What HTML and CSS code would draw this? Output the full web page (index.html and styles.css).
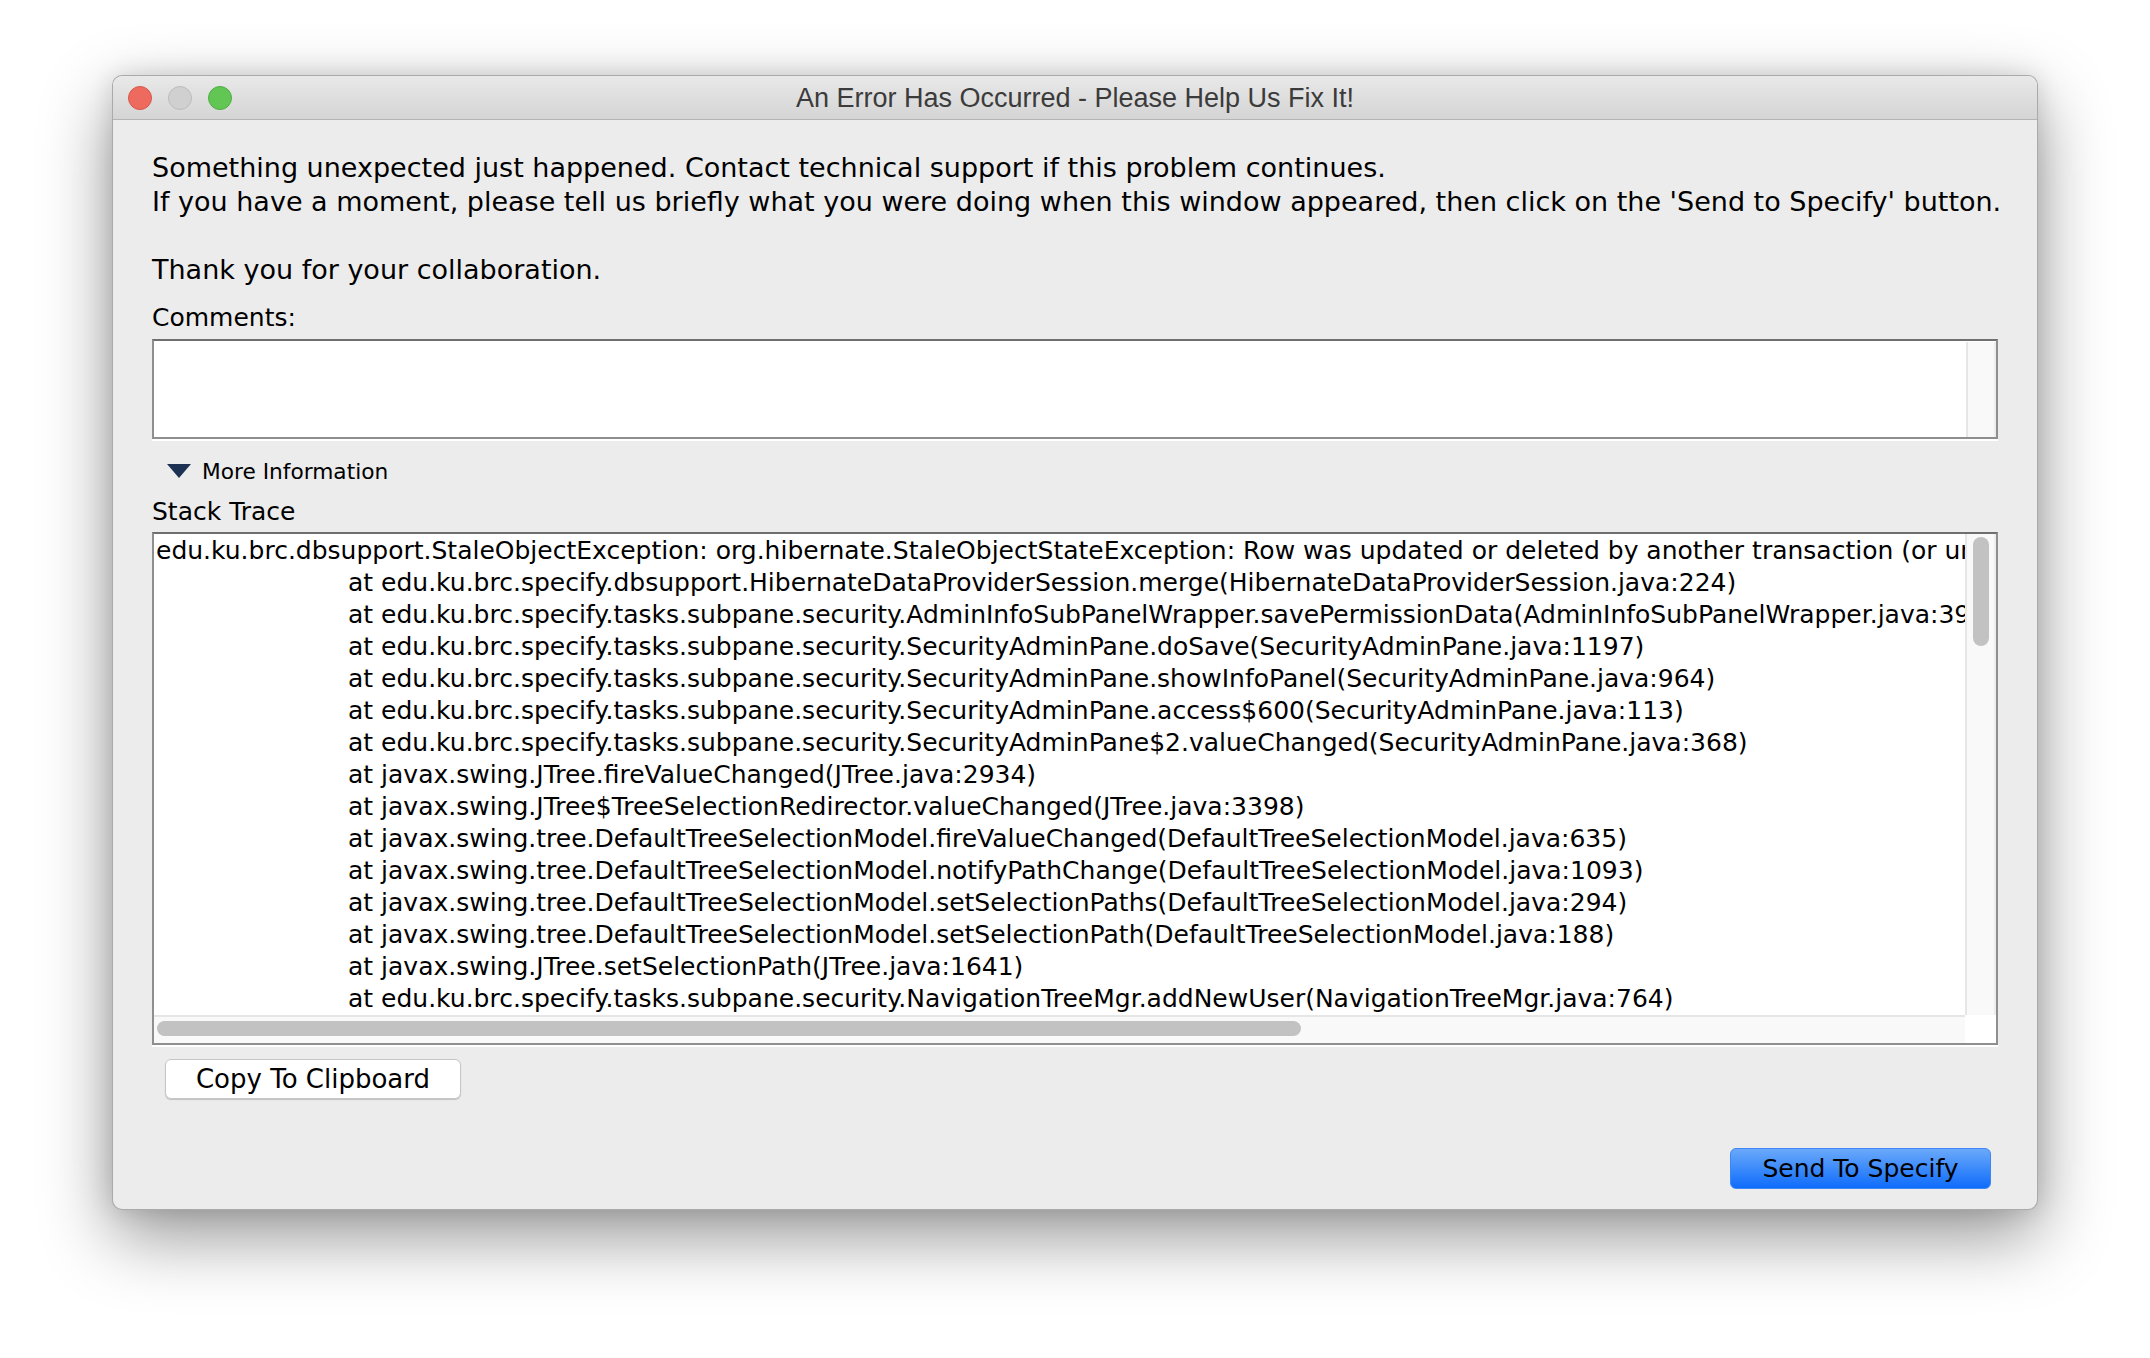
FILE: index.html
```html
<!DOCTYPE html>
<html>
<head>
<meta charset="utf-8">
<title>An Error Has Occurred</title>
<link rel="stylesheet" href="styles.css">
</head>
<body>
<div class="window">
  <div class="titlebar">
    <div class="lights">
      <span class="light red"></span>
      <span class="light gray"></span>
      <span class="light green"></span>
    </div>
    <div class="title">An Error Has Occurred - Please Help Us Fix It!</div>
  </div>
  <div class="content">
    <div class="message">
      <div>Something unexpected just happened. Contact technical support if this problem continues.</div>
      <div>If you have a moment, please tell us briefly what you were doing when this window appeared, then click on the 'Send to Specify' button.</div>
      <div class="blank">&nbsp;</div>
      <div>Thank you for your collaboration.</div>
    </div>
    <div class="label comments-label">Comments:</div>
    <div class="comments">
      <div class="comments-field"></div>
      <div class="vtrack"></div>
    </div>
    <div class="more">
      <svg class="tri" width="24" height="15" viewBox="0 0 24 15"><polygon points="0,0 24,0 12,14" fill="#1d3153"/></svg>
      <span>More Information</span>
    </div>
    <div class="label trace-label">Stack Trace</div>
    <div class="trace">
      <div class="trace-view">
        <div class="line">edu.ku.brc.dbsupport.StaleObjectException: org.hibernate.StaleObjectStateException: Row was updated or deleted by another transaction (or unsaved-value mapping was incorrect)</div>
        <div class="line at">at edu.ku.brc.specify.dbsupport.HibernateDataProviderSession.merge(HibernateDataProviderSession.java:224)</div>
        <div class="line at">at edu.ku.brc.specify.tasks.subpane.security.AdminInfoSubPanelWrapper.savePermissionData(AdminInfoSubPanelWrapper.java:391)</div>
        <div class="line at">at edu.ku.brc.specify.tasks.subpane.security.SecurityAdminPane.doSave(SecurityAdminPane.java:1197)</div>
        <div class="line at">at edu.ku.brc.specify.tasks.subpane.security.SecurityAdminPane.showInfoPanel(SecurityAdminPane.java:964)</div>
        <div class="line at">at edu.ku.brc.specify.tasks.subpane.security.SecurityAdminPane.access$600(SecurityAdminPane.java:113)</div>
        <div class="line at">at edu.ku.brc.specify.tasks.subpane.security.SecurityAdminPane$2.valueChanged(SecurityAdminPane.java:368)</div>
        <div class="line at">at javax.swing.JTree.fireValueChanged(JTree.java:2934)</div>
        <div class="line at">at javax.swing.JTree$TreeSelectionRedirector.valueChanged(JTree.java:3398)</div>
        <div class="line at">at javax.swing.tree.DefaultTreeSelectionModel.fireValueChanged(DefaultTreeSelectionModel.java:635)</div>
        <div class="line at">at javax.swing.tree.DefaultTreeSelectionModel.notifyPathChange(DefaultTreeSelectionModel.java:1093)</div>
        <div class="line at">at javax.swing.tree.DefaultTreeSelectionModel.setSelectionPaths(DefaultTreeSelectionModel.java:294)</div>
        <div class="line at">at javax.swing.tree.DefaultTreeSelectionModel.setSelectionPath(DefaultTreeSelectionModel.java:188)</div>
        <div class="line at">at javax.swing.JTree.setSelectionPath(JTree.java:1641)</div>
        <div class="line at">at edu.ku.brc.specify.tasks.subpane.security.NavigationTreeMgr.addNewUser(NavigationTreeMgr.java:764)</div>
      </div>
      <div class="vscroll"><div class="vthumb"></div></div>
      <div class="hscroll"><div class="hthumb"></div></div>
      <div class="corner"></div>
    </div>
    <div class="copy-row">
      <button class="btn copy">Copy To Clipboard</button>
    </div>
    <div class="footer">
      <button class="btn send">Send To Specify</button>
    </div>
  </div>
</div>
</body>
</html>
```
FILE: styles.css
```css
html, body {
  margin: 0;
  padding: 0;
  background: #ffffff;
}

body {
  width: 2150px;
  height: 1358px;
  overflow: hidden;
  font-family: "DejaVu Sans", "Open Sans", sans-serif;
  color: #000;
}

.window {
  margin: 75px 0 0 112px;
  width: 1926px;
  height: 1135px;
  box-sizing: border-box;
  background: #ececec;
  border-radius: 10px;
  border: 1px solid rgba(0, 0, 0, 0.28);
  box-shadow: 0 26px 70px rgba(0, 0, 0, 0.42), 0 0 24px rgba(0, 0, 0, 0.12);
  display: flex;
  flex-direction: column;
  overflow: hidden;
}

.titlebar {
  height: 43px;
  flex: none;
  display: flex;
  align-items: center;
  position: relative;
  background: linear-gradient(#e9e9e9, #d4d4d4);
  border-bottom: 1px solid #b4b4b4;
  border-radius: 9px 9px 0 0;
}

.lights {
  display: flex;
  gap: 16px;
  padding-left: 15px;
}

.light {
  width: 22px;
  height: 22px;
  border-radius: 50%;
  border: 1px solid;
}

.red { background: #ee6a5f; border-color: #d6564c; }
.gray { background: #d0d0d0; border-color: #bcbcbc; }
.green { background: #62c655; border-color: #4eae43; }

.title {
  position: absolute;
  left: 0;
  right: 0;
  top: 1px;
  bottom: 0;
  display: flex;
  align-items: center;
  justify-content: center;
  font-family: "Liberation Sans", "Roboto", sans-serif;
  font-size: 27px;
  color: #3b3b3b;
  pointer-events: none;
}

.content {
  flex: 1;
  display: flex;
  flex-direction: column;
  padding: 31px 39px 20px 39px;
  font-size: 25px;
}

.message {
  font-size: 27px;
  line-height: 34px;
  white-space: nowrap;
}

.label {
  line-height: 36px;
}

.comments-label {
  margin-top: 13px;
}

.comments {
  margin-top: 3px;
  height: 100px;
  box-sizing: border-box;
  border: 2px solid #8f8f8f;
  border-top-color: #6f6f6f;
  box-shadow: 0 2px 0 #ffffff;
  background: #fff;
  display: flex;
}

.comments-field {
  flex: 1;
}

.vtrack {
  width: 30px;
  box-sizing: border-box;
  background: #f9f9f9;
  border-left: 2px solid #e6e6e6;
  border-right: 2px solid #ededed;
  margin-top: 1px;
}

.more {
  margin-top: 17px;
  height: 30px;
  display: flex;
  align-items: center;
  padding-left: 15px;
  font-size: 21.7px;
}

.tri {
  margin-right: 11px;
}

.trace-label {
  margin-top: 8px;
}

.trace {
  margin-top: 2px;
  height: 513px;
  box-sizing: border-box;
  border: 2px solid #8f8f8f;
  border-top-color: #6f6f6f;
  box-shadow: 0 2px 0 #ffffff;
  background: #fff;
  display: grid;
  grid-template-columns: 1fr 31px;
  grid-template-rows: 481px 1fr;
}

.trace-view {
  overflow: hidden;
  padding-left: 2px;
  padding-top: 1px;
  line-height: 32px;
  white-space: nowrap;
}

.line.at {
  padding-left: 192px;
}

.vscroll {
  box-sizing: border-box;
  background: #f9f9f9;
  border-left: 2px solid #e6e6e6;
  border-right: 2px solid #ededed;
  padding: 3px 0 0 6px;
}

.vthumb {
  width: 16px;
  height: 109px;
  border-radius: 8px;
  background: #c2c2c2;
}

.hscroll {
  box-sizing: border-box;
  background: #f9f9f9;
  border-top: 2px solid #e6e6e6;
  padding: 4px 0 0 3px;
}

.hthumb {
  width: 1144px;
  height: 15px;
  border-radius: 8px;
  background: #c2c2c2;
}

.corner {
  background: #fff;
}

.copy-row {
  margin-top: 14px;
  padding-left: 13px;
}

.btn {
  font-family: "DejaVu Sans", "Open Sans", sans-serif;
  font-size: 26px;
  color: #000;
  border-radius: 6px;
  padding: 0;
}

.copy {
  width: 296px;
  height: 40px;
  background: #ffffff;
  border: 1px solid #c6c6c6;
  box-shadow: 0 1px 1px rgba(0, 0, 0, 0.18);
}

.footer {
  margin-top: auto;
  display: flex;
  justify-content: flex-end;
  padding-right: 7px;
}

.send {
  width: 261px;
  height: 41px;
  font-size: 25px;
  border: 1px solid #3d86f5;
  background: linear-gradient(#6aa9fa, #0f6cfb);
}
```
